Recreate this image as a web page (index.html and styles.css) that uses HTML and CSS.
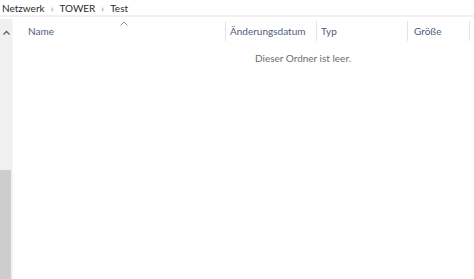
FILE: index.html
```html
<!DOCTYPE html>
<html lang="de">
<head>
<meta charset="utf-8">
<title>Test</title>
<link rel="stylesheet" href="styles.css">
</head>
<body>
<div class="window">
  <nav class="crumbs">
    <span>Netzwerk</span><span class="sep">›</span><span>TOWER</span><span class="sep">›</span><span>Test</span>
  </nav>
  <div class="main">
    <div class="scrollbar">
      <div class="arrow">
        <svg width="7" height="5" viewBox="0 0 7 5"><path d="M0.5 4.5 L3.5 1.5 L6.5 4.5" fill="none" stroke="#606060" stroke-width="1.3"/></svg>
      </div>
      <div class="track"></div>
      <div class="thumb"></div>
    </div>
    <div class="list">
      <div class="head">
        <div class="col col-name">Name
          <svg class="sort" width="8" height="5" viewBox="0 0 8 5"><path d="M0.5 4.5 L4 1 L7.5 4.5" fill="none" stroke="#909090" stroke-width="1"/></svg>
        </div>
        <div class="col col-date">Änderungsdatum</div>
        <div class="col col-type">Typ</div>
        <div class="col col-size">Größe</div>
        <div class="col col-end"></div>
      </div>
      <p class="empty">Dieser Ordner ist leer.</p>
    </div>
  </div>
</div>
</body>
</html>
```

FILE: styles.css
```css
body {
  margin: 0;
  background: #fff;
  font: normal 10px/12px Lato, "Open Sans", sans-serif;
  color: #1e1e1e;
}

.window {
  width: 474px;
  height: 279px;
  display: flex;
  flex-direction: column;
  overflow: hidden;
}

.crumbs {
  height: 15px;
  padding: 0 0 0 2px;
  display: flex;
  align-items: center;
  border-bottom: 2px solid #f1f1f1;
  color: #2a2a2a;
}

.crumbs .sep {
  color: #8a8a8a;
  margin: 0 6px;
}

.main {
  flex: 1;
  display: flex;
  padding-top: 2px;
}

.scrollbar {
  width: 12px;
  background: #f0f0f0;
  display: flex;
  flex-direction: column;
  border-right: 1px solid #f6f6f6;
}

.arrow {
  height: 20px;
  display: flex;
  align-items: center;
  justify-content: center;
  padding-top: 3px;
}

.track {
  height: 128px;
}

.thumb {
  flex: 1;
  background: #cdcdcd;
  margin-right: 1px;
}

.list {
  flex: 1;
}

.head {
  display: flex;
  height: 22px;
  padding-top: 1px;
}

.col {
  position: relative;
  display: flex;
  align-items: center;
  color: #4c607a;
  border-right: 1px solid #e5e5e5;
  padding-left: 4px;
  box-sizing: border-box;
  margin: 1px 0;
}

.col-name {
  width: 213px;
  padding-left: 15px;
}

.col-date {
  width: 91px;
}

.col-type {
  width: 91px;
}

.col-size {
  width: 62px;
  padding-left: 6px;
}

.col-end {
  width: 4px;
  border-right: none;
}

.sort {
  position: absolute;
  left: 107px;
  top: 0;
}

.empty {
  margin: 10px 0 0 215px;
  text-align: center;
  width: 150px;
  color: #6d6d6d;
}
```
